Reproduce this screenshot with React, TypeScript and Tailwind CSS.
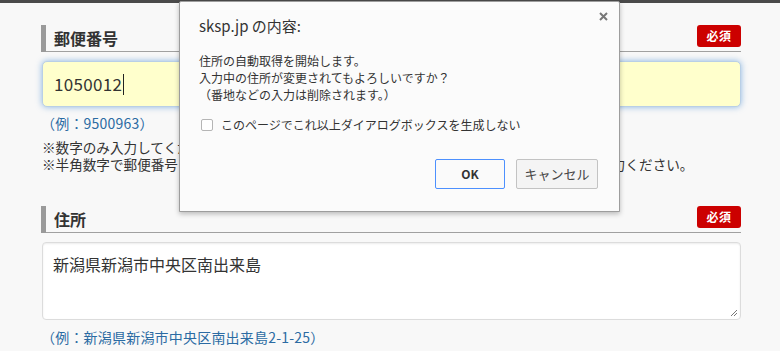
import React from "react";

const jp = "font-['Noto_Sans_CJK_JP',sans-serif]";

function SectionHeader({ title }: { title: string }) {
    return (
        <div className="flex items-start justify-between h-[27px] border-b border-[#a0a0a0]">
            <div className="flex items-center h-[27px] border-l-[5px] border-[#9a9a9a] pl-2 pb-px text-[16px] font-bold text-[#333]">
                {title}
            </div>
            <span className="flex items-center justify-center w-[44px] h-[22px] rounded-[3px] bg-[#cc0000] text-white text-[12px] font-bold tracking-wider">
                必須
            </span>
        </div>
    );
}

function Dialog() {
    return (
        <div className={`absolute left-[179px] top-px w-[441px] h-[211px] bg-[#fbfbfb] border border-[#9d9d9d] rounded-t-[2px] shadow-[0_2px_5px_rgba(0,0,0,0.25)] ${jp}`}>
            <button className="absolute right-[8px] top-[6px] w-4 h-4 flex items-center justify-center text-[#777]">
                <svg width="9" height="9" viewBox="0 0 9 9">
                    <path d="M1 1 L8 8 M8 1 L1 8" stroke="#777" strokeWidth="2" />
                </svg>
            </button>
            <div className="pt-[14px] pl-[19px] text-[15px] leading-[20px] text-[#333]">sksp.jp の内容:</div>
            <div className="pt-[16px] pl-[19px] text-[12px] leading-[17px] text-[#333]">
                <p>住所の自動取得を開始します。</p>
                <p>入力中の住所が変更されてもよろしいですか？</p>
                <p>（番地などの入力は削除されます。）</p>
            </div>
            <label className="flex items-center gap-2 pt-[13px] pl-[21px] text-[12px] leading-[17px] text-[#333]">
                <span className="w-[12px] h-[12px] border border-[#b5b5b5] rounded-[2px] bg-white" />
                このページでこれ以上ダイアログボックスを生成しない
            </label>
            <div className="flex justify-end gap-[11px] pt-[26px] pr-[21px]">
                <button className="w-[70px] h-[30px] border border-[#4d90fe] rounded-[2px] bg-[#fafafa] text-[12px] font-bold text-[#333]">
                    OK
                </button>
                <button className="w-[82px] h-[30px] border border-[#c3c3c3] rounded-[2px] bg-[#f4f4f4] text-[13px] text-[#444]">
                    キャンセル
                </button>
            </div>
        </div>
    );
}

export default function App() {
    return (
        <div className={`relative w-[780px] h-[351px] overflow-hidden bg-[#f8f8f8] text-[#333] ${jp}`}>
            <div className="h-[3px] bg-[#4a4a4a]" />

            <div className="flex flex-col w-[700px] ml-[41px] pt-[22px]">
                {/* 郵便番号 */}
                <SectionHeader title="郵便番号" />
                <div className="mt-[9px] ml-px flex items-center h-[46px] rounded-[5px] bg-[#ffffcc] border border-[#b9cfe6] shadow-[0_0_6px_rgba(82,146,214,0.65)] pl-[11px]">
                    <span className="text-[17px] text-[#333] tracking-[0.3px]">1050012</span>
                    <span className="ml-px w-px h-[21px] bg-[#222]" />
                </div>
                <p className="mt-[7px] text-[14px] leading-[18px] text-[#2b6ba3] tracking-[0.2px]">（例：9500963）</p>
                <div className="mt-[7px] ml-px text-[13.6px] leading-[17px] text-[#333] whitespace-nowrap">
                    <p>※数字のみ入力してください。</p>
                    <p>※半角数字で郵便番号を入力すると、住所が自動で入力されますので、続けて番地以降をご入力ください。</p>
                </div>

                {/* 住所 */}
                <div className="mt-[33px]">
                    <SectionHeader title="住所" />
                </div>
                <div className="relative mt-[9px] ml-px h-[78px] rounded-[4px] bg-white border border-[#dcdcdc] shadow-[inset_0_1px_2px_rgba(0,0,0,0.08)] pl-[10px] pt-[9px]">
                    <span className="text-[16px] leading-[24px] text-[#333]">新潟県新潟市中央区南出来島</span>
                    <svg className="absolute right-[2px] bottom-[2px]" width="8" height="8" viewBox="0 0 8 8">
                        <path d="M1 7 L7 1 M4 7 L7 4" stroke="#777" strokeWidth="1" />
                    </svg>
                </div>
                <p className="mt-[8px] text-[14px] leading-[18px] text-[#2b6ba3] tracking-[0.2px]">（例：新潟県新潟市中央区南出来島2-1-25）</p>
            </div>

            <Dialog />
        </div>
    );
}
